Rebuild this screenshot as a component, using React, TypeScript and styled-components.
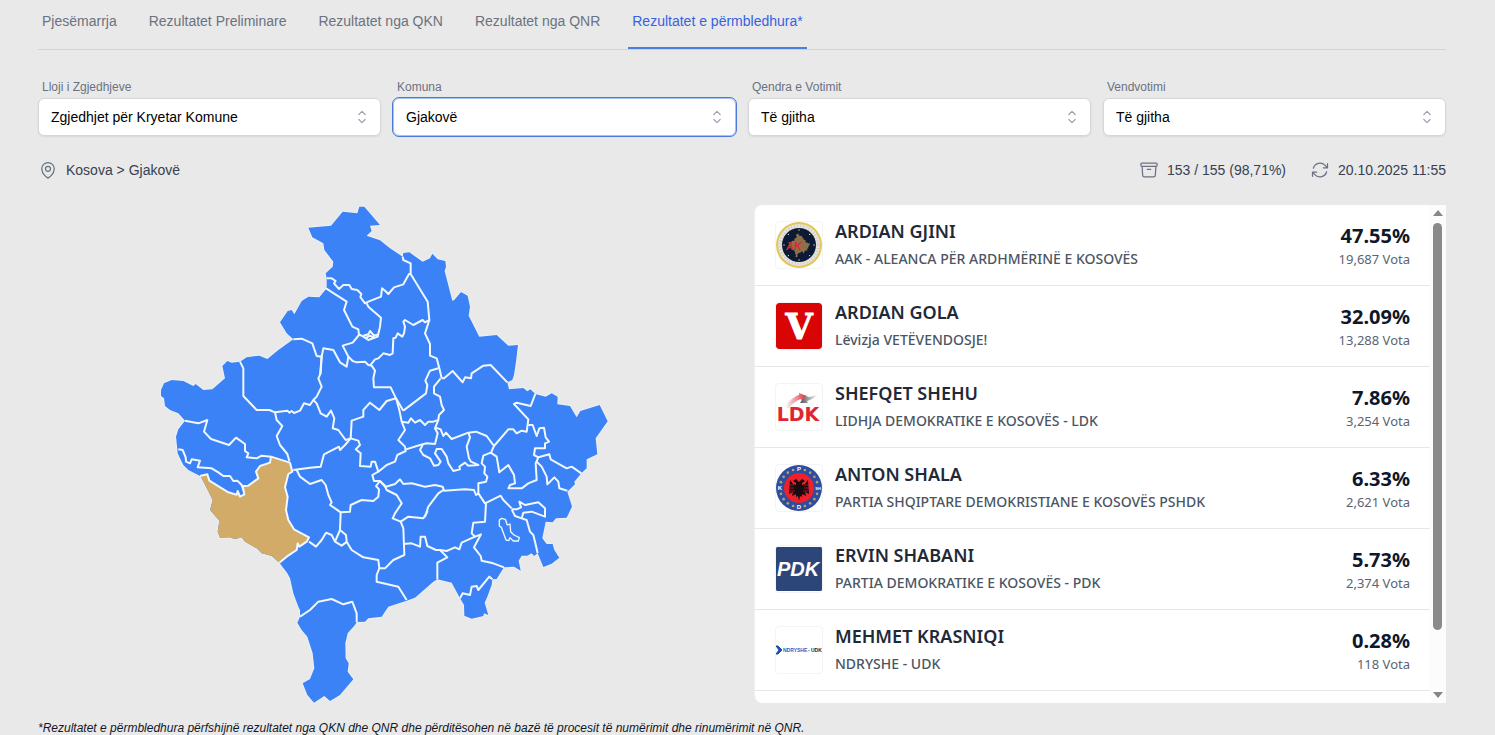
import React from "react";
import styled, { createGlobalStyle } from "styled-components";

const GlobalStyle = createGlobalStyle`
  *, *::before, *::after { box-sizing: border-box; }
  body {
    margin: 0;
    background: #e9e9e9;
    font-family: "Liberation Sans", Arial, sans-serif;
    color: #374151;
  }
`;

const Page = styled.main`
  padding: 0 49px 0 38px;
`;

const Tabs = styled.nav`
  display: flex;
  gap: 24px;
  height: 50px;
  border-bottom: 1px solid #d1d3d6;
`;

const Tab = styled.button<{ $active?: boolean }>`
  height: 49px;
  padding: 0 4px 6px;
  border: 0;
  border-bottom: 2px solid ${(p) => (p.$active ? "#4a7fe0" : "transparent")};
  background: none;
  font: 14px/20px "Liberation Sans", Arial, sans-serif;
  color: ${(p) => (p.$active ? "#3662e0" : "#6b7280")};
  white-space: nowrap;
  cursor: pointer;
`;

const Filters = styled.form`
  display: grid;
  grid-template-columns: repeat(4, 1fr);
  gap: 12px;
  margin-top: 28px;
`;

const Field = styled.div`
  display: flex;
  flex-direction: column;
  gap: 2px;
`;

const FieldLabel = styled.label`
  padding-left: 4px;
  font-size: 12px;
  line-height: 18px;
  color: #6b7280;
`;

const SelectBox = styled.div`
  position: relative;
  color: #9ca3af;

  svg {
    position: absolute;
    right: 9px;
    top: 9px;
    pointer-events: none;
  }
`;

const Select = styled.select<{ $focused?: boolean }>`
  appearance: none;
  width: 100%;
  height: 38px;
  padding: 0 40px 0 12px;
  border: 1px solid ${(p) => (p.$focused ? "#a3c4f3" : "#d4d6da")};
  border-radius: 6px;
  outline: ${(p) => (p.$focused ? "1px solid #4d7bd6" : "none")};
  outline-offset: 0;
  background: #fff;
  box-shadow: 0 1px 2px rgba(0, 0, 0, 0.08);
  font: 14px/20px "Liberation Sans", Arial, sans-serif;
  color: #000;
`;

const InfoBar = styled.div`
  display: flex;
  justify-content: space-between;
  align-items: center;
  margin: 24px 0 25px;
`;

const InfoGroup = styled.div`
  display: flex;
  gap: 24px;
`;

const Info = styled.span`
  display: flex;
  align-items: center;
  gap: 8px;
  font-size: 14px;
  line-height: 20px;
  color: #374151;

  svg {
    color: #6b7280;
  }
`;

const Content = styled.section`
  display: grid;
  grid-template-columns: 1fr 1fr;
  gap: 24px;
`;

const MapArea = styled.div`
  display: flex;
  justify-content: center;
`;

const MapSvg = styled.svg`
  display: block;
  width: 100%;
  max-width: 468px;
  overflow: visible;
  fill: none;
  stroke: #f1f8ff;
  stroke-width: 6;
  stroke-linejoin: round;
`;

const Panel = styled.div`
  display: flex;
  overflow: hidden;
  border: 1px solid #efefef;
  border-width: 0 0 0 1px;
  border-radius: 8px 0 0 8px;
  background: #fff;
`;

const Results = styled.ul`
  flex: 1;
  margin: 0;
  padding: 0;
  list-style: none;
  font-family: "Noto Sans", "Open Sans", sans-serif;
`;

const Row = styled.li`
  display: flex;
  align-items: center;
  gap: 12px;
  height: 81px;
  padding: 0 20px;
  border-bottom: 1px solid #e5e7eb;
`;

const Logo = styled.div`
  width: 48px;
  height: 48px;
  overflow: hidden;
  border: 1px solid #f3f4f6;
  border-radius: 4px;

  svg {
    display: block;
  }
`;

const Candidate = styled.div`
  flex: 1;
`;

const Name = styled.h2`
  margin: 0;
  font-size: 18px;
  font-weight: 600;
  line-height: 28px;
  color: #1f2937;
`;

const Party = styled.p`
  margin: 0;
  font-size: 14px;
  font-weight: 500;
  line-height: 28px;
  color: #4b5563;
`;

const Score = styled.div`
  text-align: right;
`;

const Percent = styled.div`
  font-size: 20px;
  font-weight: 700;
  line-height: 28px;
  color: #0f172a;
`;

const Votes = styled.div`
  font-size: 13px;
  line-height: 18px;
  color: #5b6472;
`;

const ScrollTrack = styled.div`
  display: flex;
  flex-direction: column;
  align-items: center;
  width: 16px;
  padding: 5px 1px 5px 0;
  background: #fcfcfc;
`;

const Arrow = styled.span<{ $down?: boolean }>`
  border: 5px solid transparent;
  border-top: ${(p) => (p.$down ? "6px solid #868686" : "0")};
  border-bottom: ${(p) => (p.$down ? "0" : "6px solid #868686")};
`;

const ScrollBody = styled.div`
  flex: 1;
  width: 9px;
  margin: 7px 0;
`;

const Thumb = styled.div`
  height: 88%;
  border-radius: 5px;
  background: #8a8a8a;
`;

const Footnote = styled.p`
  margin: 18px 0 0;
  font-size: 12px;
  font-style: italic;
  line-height: 14px;
  color: #111827;
`;

const icons = {
  pin: "M15 10.5a3 3 0 1 1-6 0 3 3 0 0 1 6 0ZM19.5 10.5c0 7.142-7.5 11.25-7.5 11.25S4.5 17.642 4.5 10.5a7.5 7.5 0 1 1 15 0Z",
  box: "m20.25 7.5-.625 10.632a2.25 2.25 0 0 1-2.247 2.118H6.622a2.25 2.25 0 0 1-2.247-2.118L3.75 7.5M10 11.25h4M3.375 7.5h17.25c.621 0 1.125-.504 1.125-1.125v-1.5c0-.621-.504-1.125-1.125-1.125H3.375c-.621 0-1.125.504-1.125 1.125v1.5c0 .621.504 1.125 1.125 1.125Z",
  refresh:
    "M16.023 9.348h4.992v-.001M2.985 19.644v-4.992m0 0h4.992m-4.993 0 3.181 3.183a8.25 8.25 0 0 0 13.803-3.7M4.031 9.865a8.25 8.25 0 0 1 13.803-3.7l3.181 3.182m0-4.991v4.99",
  updown: "M8.25 15 12 18.75 15.75 15m-7.5-6L12 5.25 15.75 9",
};

function Icon({ name }: { name: keyof typeof icons }) {
  return (
    <svg width="20" height="20" viewBox="0 0 24 24" fill="none" stroke="currentColor" strokeWidth="1.5" strokeLinecap="round" strokeLinejoin="round" aria-hidden="true">
      <path d={icons[name]} />
    </svg>
  );
}

const country =
  "M628 35 643 35 690 90 660 92 665 108 650 122 690 136 720 160 758 185 760 174 778 172 818 200 840 190 847 176 863 193 886 198 888 215 884 228 907 317 912 316 933 291 953 302 960 335 956 362 988 425 1040 420 1075 452 1104 450 1098 500 1092 540 1087 555 1072 562 1077 583 1120 579 1132 589 1141 583 1156 597 1187 605 1205 595 1223 605 1222 628 1260 633 1280 667 1291 648 1349 630 1373 679 1337 730 1342 778 1310 793 1310 820 1294 835 1273 860 1275 868 1252 890 1263 925 1266 935 1250 968 1218 970 1208 982 1187 980 1177 1030 1190 1047 1208 1047 1213 1065 1228 1088 1205 1106 1180 1116 1163 1075 1152 1083 1145 1075 1132 1082 1115 1082 1106 1097 1112 1127 1092 1115 1062 1117 1040 1152 1027 1153 1025 1170 1012 1205 1004 1223 1015 1260 1002 1255 1000 1263 965 1271 943 1262 942 1230 930 1210 905 1163 862 1153 850 1160 795 1208 770 1217 715 1235 695 1265 655 1270 645 1280 620 1281 615 1290 593 1315 586 1345 587 1390 596 1405 593 1430 610 1453 570 1500 540 1518 523 1503 492 1523 472 1500 458 1465 480 1452 493 1420 488 1375 472 1325 455 1305 442 1283 450 1265 450 1245 445 1235 430 1195 420 1150 412 1135 388 1103 365 1083 335 1075 320 1060 285 1040 275 1027 255 1033 240 1027 210 1028 203 1010 208 977 180 945 188 915 155 850 150 843 115 825 100 810 90 790 83 775 82 763 78 725 85 703 105 677 85 655 60 645 45 633 42 610 33 603 33 585 42 565 65 555 100 558 130 573 137 567 160 585 187 583 225 550 217 513 232 498 245 503 270 500 290 487 328 482 352 492 385 465 430 433 410 415 390 382 413 348 425 345 433 358 455 318 475 305 508 307 530 280 530 250 527 235 548 215 550 200 523 165 520 145 487 127 475 98 543 92 578 50 622 55Z";

const gjakova =
  "M150 843 172 838 178 857 235 892 260 899 263 888 270 905 283 898 278 873 295 872 325 850 318 830 330 813 360 803 363 785 420 803 427 830 415 837 405 877 413 905 408 945 415 975 432 1003 477 1027 470 1040 448 1055 443 1045 440 1065 410 1085 388 1103 365 1083 335 1075 320 1060 285 1040 275 1027 255 1033 240 1027 210 1028 203 1010 208 977 180 945 188 915 155 850Z";

/* The part of Gjakova's border shared with its neighbours */
const gjakovaInner =
  "M150 843 172 838 178 857 235 892 260 899 263 888 270 905 283 898 278 873 295 872 325 850 318 830 330 813 360 803 363 785 420 803 427 830 415 837 405 877 413 905 408 945 415 975 432 1003 477 1027 470 1040 448 1055 443 1045 440 1065 410 1085 388 1103";

/* Municipal borders, west and north */
const bordersWest = [
  "M530 250 545 250 557 258 552 265 567 282 580 270 598 270 605 282 622 285 634 297 631 306 645 325 655 320 693 305 696 280 706 288 715 297 732 277 760 268 777 237 783 237",
  "M758 185 760 195 782 205 782 237 833 320 838 375 825 382 818 375 790 390 765 375 760 380 765 395 762 415 757 425 743 415 737 428 730 430 728 475 720 480 700 475 685 490 675 493 660 512",
  "M838 375 825 415 840 447 840 482 860 490 868 520 875 550",
  "M865 520 840 527 826 557 832 570 828 595 760 647",
  "M528 280 590 320 582 345 607 395 625 403 627 420 608 443 578 452 595 485 590 515 570 502 550 465 520 460 515 485 510 540",
  "M430 433 455 431 487 445 500 483 515 485",
  "M650 325 655 335 693 368 690 395 683 425 655 435 640 425 627 418M640 422 655 418 660 408 672 422 684 418M645 430 660 422 675 430",
  "M595 485 608 498 620 502 645 500 655 510 665 512 675 527 670 550 672 577 722 577 738 610 760 647",
  "M738 610 710 618 688 645 660 623 640 645 640 665 605 677 602 730",
  "M270 500 280 520 280 603 320 645 358 645 375 652 412 647 418 653 425 648 432 654 450 647 462 625 480 630 490 615 500 605 515 575 505 550 512 535 515 480",
  "M490 615 500 625 512 655 530 665 543 647 553 670 548 700 565 705 587 735 602 730",
  "M602 730 585 750 570 765 567 755 522 778 512 815 480 818 430 825",
  "M375 652 380 675 397 693 380 723 390 750 412 777 418 798",
  "M105 677 145 685 172 675 162 710 183 732 237 750 258 728 285 747 285 768 295 775 290 787 320 790 335 782 363 785",
  "M85 763 98 765 107 787 108 800 120 805 125 793 150 797 143 817 185 820 205 832 220 843 240 843 250 858 262 857 275 870 285 898",
  "M440 825 450 845 480 867 515 855 527 870 535 900 545 922 540 930 555 940 572 952 570 1005",
  "M572 952 600 950 602 930 635 915 670 918 685 905 687 883 678 873 690 858",
  "M602 730 625 737 630 750 617 763 632 775 630 813 662 815 665 800 675 800 685 830 667 840 672 858 690 858 705 875",
  "M685 830 710 810 735 800 742 780 767 768 765 755 745 735 765 705 755 680 748 645 738 610",
  "M705 875 710 885 740 900 755 925 745 940 735 955 728 970 752 980 775 965 820 970 832 950 825 965 835 935 865 895 880 885",
  "M752 980 760 1000 763 1080 730 1095 705 1120 688 1120 685 1095 640 1087 605 1065 590 1040 588 1020 570 1005 555 1040 575 1052 588 1042",
  "M555 1040 545 1020 528 1013 515 1035 498 1055 477 1040",
  "M688 1120 680 1140 680 1160 745 1175 770 1215",
  "M450 1265 480 1245 505 1220 545 1212 580 1228 607 1220 620 1255 620 1281",
];

/* Central and eastern borders, relative to the capital's north-west corner */
const bordersEast = [
  "M95 215 115 218 123 205 135 218 150 210 165 225 175 215 190 215 205 210 207 195 222 180 215 165 210 140 192 130 192 110 212 85",
  "M205 210 195 235 203 250 195 282 170 280 150 285 108 298",
  "M195 232 212 238 220 258 228 248 245 267 295 248 318 245 350 258 372 288 362 310",
  "M295 248 300 262 290 290 297 325 303 335 325 345 295 347 285 338 268 350 270 358 250 363 235 340 230 320 215 297 200 297 195 310 212 335 205 345 192 347 180 325 160 315 150 300 158 285",
  "M215 85 222 85 248 63 278 97 285 82 303 85 305 70 340 47 362 45 412 97",
  "M496 132 482 168 440 158 432 162 475 208 470 245 455 242 440 250 430 238 415 238 372 288",
  "M475 225 488 225 500 258 508 235 522 233 527 262 537 275 525 280 525 295 495 295 492 315 505 322 497 340 500 390 475 400 455 415 415 415 420 405 435 400 432 375 415 345 388 367 380 320 362 308",
  "M505 322 538 313 542 328 590 355 605 350 634 370",
  "M500 335 515 350 530 380 532 403 553 382 565 395 568 415 592 422",
  "M362 308 340 317 335 340 345 350 343 370 352 380 348 395 325 400 325 430",
  "M30 393 48 410 75 402 90 388 100 402 125 400 165 410 195 405 218 410 222 422 285 418 312 420 318 435 325 430 345 460 392 437 400 450 425 475",
];

/* South-eastern borders */
const bordersSouth = [
  "M258 100 255 155 220 158 215 190 225 200 243 193 222 232 242 258 245 272 280 280 312 292",
  "M225 200 185 218 178 238 165 232 140 243 120 240 108 240 82 228 75 200 62 200 60 230 35 220 10 222",
  "M120 240 142 262 112 278 112 328",
  "M180 385 188 370 210 375 215 350 230 348 235 360 268 320 277 328",
  "M335 118 350 118 363 112 358 95 375 105 415 97 435 115 435 140 395 125 370 128 365 145 345 138 335 118",
  "M365 145 380 150 390 185 400 195 405 215 413 250",
];

const enclave = "M298 150 305 145 316 148 322 165 330 162 332 185 342 195 358 203 355 213 340 213 330 203 326 212 318 210 308 183 304 172 298 168Z";

const lines = (paths: string[]) => paths.map((d) => <path key={d} d={d} />);

function KosovoMap() {
  return (
    <MapSvg viewBox="0 30 1404 1494" role="img" aria-label="Harta e Kosovës">
      <path d={country} stroke="#eef1f5" strokeWidth="5" />
      <path d={country} fill="#3b82f6" stroke="none" />
      {lines(bordersWest)}
      <g transform="translate(660 465)">{lines(bordersEast)}</g>
      <g transform="translate(750 825)">
        {lines(bordersSouth)}
        <path d={enclave} strokeWidth="4" />
      </g>
      <path d={gjakova} fill="#d1ab67" stroke="none" />
      <path d={gjakovaInner} />
    </MapSvg>
  );
}

const ring = (count: number, radius: number) =>
  Array.from({ length: count }, (_, i) => {
    const a = (i / count) * Math.PI * 2;
    return { x: 23 + Math.sin(a) * radius, y: 23 - Math.cos(a) * radius };
  });

const logos: Record<string, React.ReactNode> = {
  aak: (
    <>
      <circle cx="23" cy="23" r="22" fill="#e8e4de" stroke="#e3c65a" strokeWidth="2" />
      <circle cx="23" cy="23" r="19" fill="none" stroke="#cfcac9" strokeWidth="3" strokeDasharray="1 2" />
      <circle cx="23" cy="23" r="17" fill="#0c1b33" />
      {ring(8, 15).map((p, i) => (
        <circle key={i} cx={p.x} cy={p.y} r=".7" fill="#dcd9cf" />
      ))}
      <path d={country} transform="translate(12 11) scale(.016)" fill="#8d7049" />
      <text x="10" y="28" fontFamily="Liberation Sans" fontSize="11" fontWeight="700" fontStyle="italic" fill="#d32c37">AK</text>
    </>
  ),
  lvv: (
    <>
      <rect width="46" height="46" rx="3" fill="#d90404" />
      <text x="23" y="36" textAnchor="middle" fontFamily="DejaVu Serif" fontSize="35" fontWeight="700" fill="#fff" stroke="#fff" strokeWidth="1">V</text>
    </>
  ),
  ldk: (
    <>
      <defs>
        <linearGradient id="ldkRed"><stop offset="0" stopColor="#fff" /><stop offset="1" stopColor="#dc2a36" /></linearGradient>
        <linearGradient id="ldkGrey"><stop offset="0" stopColor="#4d5358" /><stop offset="1" stopColor="#fff" /></linearGradient>
      </defs>
      <path d="M9 24C12 17 17 13 23 11L23 9 31 12 26 18 25 15C19 17 15 21 13 24Z" fill="url(#ldkRed)" />
      <path d="M24 19 29 12 33 13 42 11C38 14 35 16 31 17L32 19Z" fill="url(#ldkGrey)" />
      <text x="22" y="37" textAnchor="middle" fontFamily="DejaVu Sans" fontSize="19" fontWeight="700" fill="#e12431">LDK</text>
    </>
  ),
  pshdk: (
    <>
      <circle cx="23" cy="23" r="23" fill="#2f4da0" />
      {ring(20, 19).map((p, i) => i % 5 !== 0 && <circle key={i} cx={p.x} cy={p.y} r="1.3" fill="#b3a567" />)}
      <g fontFamily="Liberation Sans" fontSize="6" fontWeight="700" fill="#fff" textAnchor="middle">
        <text x="23" y="6">P</text>
        <text x="42" y="25" fontSize="4">SH</text>
        <text x="23" y="44">D</text>
        <text x="4" y="25">K</text>
      </g>
      <circle cx="23" cy="23" r="15" fill="#ee2029" />
      <path d="M23 17 20 14 17 16 20 18 20 20 17 19 14 15 13 29 17 27 16 31 20 29 20 32 22 31 23 36 24 31 26 32 26 29 30 31 29 27 33 29 32 15 29 19 26 20 26 18 29 16 26 14Z" fill="#190c10" />
      <path d="M13 20H18M13 23H18M14 26H19M28 20H33M28 23H33M27 26H32" stroke="#ee2029" strokeWidth=".6" />
    </>
  ),
  pdk: (
    <>
      <rect y="1" width="46" height="44" rx="1" fill="#2d4679" />
      <text x="22" y="30" textAnchor="middle" fontFamily="Liberation Sans" fontSize="20" fontWeight="700" fontStyle="italic" fill="#fff">PDK</text>
    </>
  ),
  udk: (
    <>
      <path d="M0 19H2L6 23 2 27H0L3 23Z" fill="#1c4fa8" stroke="#1c4fa8" />
      <g fontFamily="Liberation Sans" fontSize="5" fontWeight="700">
        <text x="7" y="25" fill="#2a62c4">NDRYSHE</text>
        <text x="32" y="25" fill="#2a62c4">-</text>
        <text x="35" y="25" fill="#1b1b1f">UDK</text>
      </g>
    </>
  ),
};

const results = [
  { logo: "aak", name: "ARDIAN GJINI", party: "AAK - ALEANCA PËR ARDHMËRINË E KOSOVËS", percent: "47.55%", votes: "19,687" },
  { logo: "lvv", name: "ARDIAN GOLA", party: "Lëvizja VETËVENDOSJE!", percent: "32.09%", votes: "13,288" },
  { logo: "ldk", name: "SHEFQET SHEHU", party: "LIDHJA DEMOKRATIKE E KOSOVËS - LDK", percent: "7.86%", votes: "3,254" },
  { logo: "pshdk", name: "ANTON SHALA", party: "PARTIA SHQIPTARE DEMOKRISTIANE E KOSOVËS PSHDK", percent: "6.33%", votes: "2,621" },
  { logo: "pdk", name: "ERVIN SHABANI", party: "PARTIA DEMOKRATIKE E KOSOVËS - PDK", percent: "5.73%", votes: "2,374" },
  { logo: "udk", name: "MEHMET KRASNIQI", party: "NDRYSHE - UDK", percent: "0.28%", votes: "118" },
];

const tabs = ["Pjesëmarrja", "Rezultatet Preliminare", "Rezultatet nga QKN", "Rezultatet nga QNR", "Rezultatet e përmbledhura*"];

const filters = [
  { id: "lloji", label: "Lloji i Zgjedhjeve", value: "Zgjedhjet për Kryetar Komune" },
  { id: "komuna", label: "Komuna", value: "Gjakovë", focused: true },
  { id: "qendra", label: "Qendra e Votimit", value: "Të gjitha" },
  { id: "vendvotimi", label: "Vendvotimi", value: "Të gjitha" },
];

export default function App() {
  return (
    <>
      <GlobalStyle />
      <Page>
        <Tabs>
          {tabs.map((tab, i) => (
            <Tab key={tab} type="button" $active={i === tabs.length - 1}>
              {tab}
            </Tab>
          ))}
        </Tabs>

        <Filters>
          {filters.map((f) => (
            <Field key={f.id}>
              <FieldLabel htmlFor={f.id}>{f.label}</FieldLabel>
              <SelectBox>
                <Select id={f.id} $focused={f.focused}>
                  <option>{f.value}</option>
                </Select>
                <Icon name="updown" />
              </SelectBox>
            </Field>
          ))}
        </Filters>

        <InfoBar>
          <Info>
            <Icon name="pin" />
            Kosova &gt; Gjakovë
          </Info>
          <InfoGroup>
            <Info>
              <Icon name="box" />
              153 / 155 (98,71%)
            </Info>
            <Info>
              <Icon name="refresh" />
              20.10.2025 11:55
            </Info>
          </InfoGroup>
        </InfoBar>

        <Content>
          <MapArea>
            <KosovoMap />
          </MapArea>
          <Panel>
            <Results>
              {results.map((r) => (
                <Row key={r.name}>
                  <Logo>
                    <svg width="46" height="46" viewBox="0 0 46 46" aria-hidden="true">
                      {logos[r.logo]}
                    </svg>
                  </Logo>
                  <Candidate>
                    <Name>{r.name}</Name>
                    <Party>{r.party}</Party>
                  </Candidate>
                  <Score>
                    <Percent>{r.percent}</Percent>
                    <Votes>{r.votes} Vota</Votes>
                  </Score>
                </Row>
              ))}
            </Results>
            <ScrollTrack aria-hidden="true">
              <Arrow />
              <ScrollBody>
                <Thumb />
              </ScrollBody>
              <Arrow $down />
            </ScrollTrack>
          </Panel>
        </Content>

        <Footnote>
          *Rezultatet e përmbledhura përfshijnë rezultatet nga QKN dhe QNR dhe përditësohen në bazë të procesit të numërimit dhe rinumërimit në QNR.
        </Footnote>
      </Page>
    </>
  );
}
